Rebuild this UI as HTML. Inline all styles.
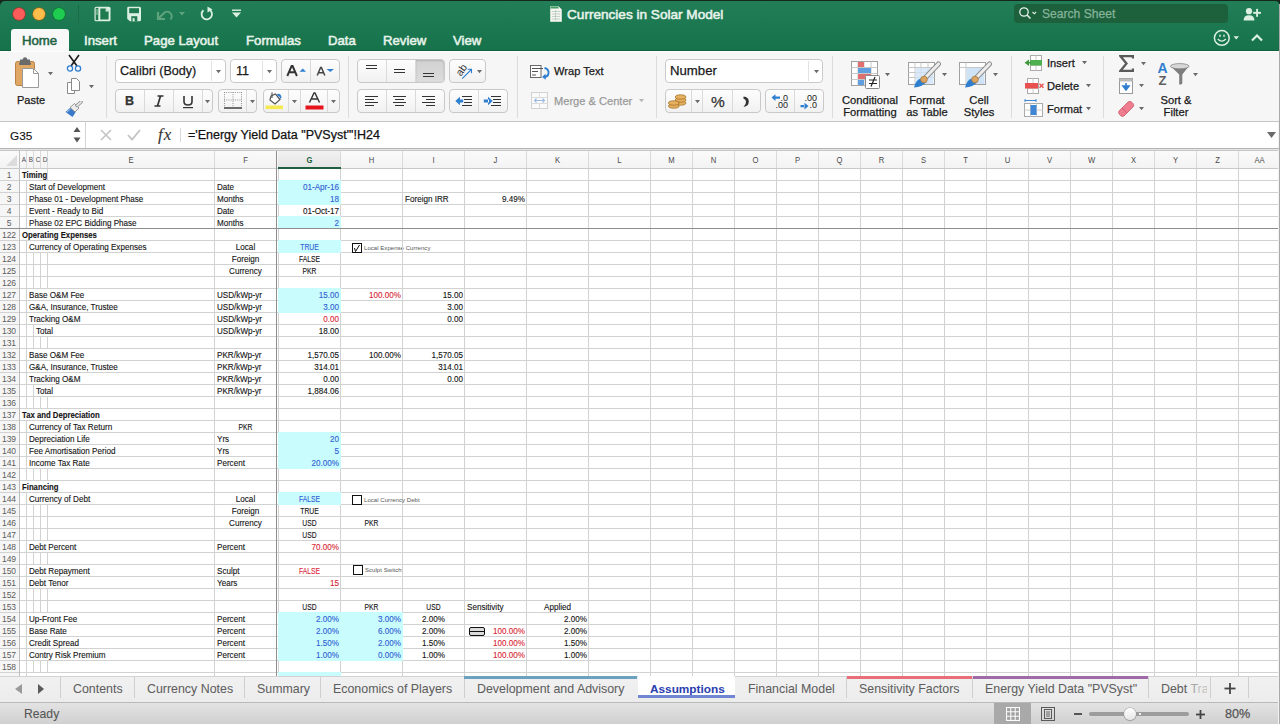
<!DOCTYPE html><html><head><meta charset="utf-8"><style>

*{margin:0;padding:0;box-sizing:border-box}
html,body{width:1280px;height:724px;overflow:hidden;background:#f2f2f2;font-family:"Liberation Sans",sans-serif}
.a{position:absolute}
.t{position:absolute;white-space:nowrap;line-height:1;-webkit-text-stroke:0.25px currentColor}
.btn{position:absolute;border:1px solid #c9c9c9;border-radius:4px;background:linear-gradient(#fdfdfd,#f1f1f1)}
.sep{position:absolute;width:1px;background:#dcdcdc}
.cell{position:absolute;white-space:nowrap;font-size:9px;-webkit-text-stroke:0.12px currentColor;line-height:12px;height:12px;color:#141414;overflow:visible}
.ch{position:absolute;top:151px;height:18px;line-height:18px;text-align:center;font-size:9px;color:#4a4a4a;transform:scaleX(0.85)}
.rh{position:absolute;left:0;width:18px;text-align:center;font-size:8.5px;line-height:12px;color:#5c5c5c}
.tab{position:absolute;-webkit-text-stroke:0.05px currentColor;top:676px;height:26px;line-height:26px;font-size:12.4px;color:#5e5e5e;white-space:nowrap}
.tsep{position:absolute;top:677px;width:1px;height:21px;background:#cfcfcf}

</style></head><body>
<div class="a" style="left:0;top:0;width:1280px;height:8px;background:#17261c"></div>
<div class="a" style="left:0;top:1px;width:1280px;height:50px;background:linear-gradient(#217e56,#15724a);border-radius:5px 5px 0 0"></div>
<div class="a" style="left:0;top:50px;width:1280px;height:1px;background:#10603b"></div>
<div class="a" style="left:13px;top:8px;width:12px;height:12px;border-radius:50%;background:#fc5c5a;box-shadow:0 0 0 0.8px #9c3a2e"></div>
<div class="a" style="left:33px;top:8px;width:12px;height:12px;border-radius:50%;background:#fdbd4a;box-shadow:0 0 0 0.8px #8f6a1e"></div>
<div class="a" style="left:53px;top:8px;width:12px;height:12px;border-radius:50%;background:#1dcc50;box-shadow:0 0 0 0.8px #0f7a34"></div>
<div class="a" style="left:78px;top:5px;width:1px;height:18px;background:#1a6b45"></div>
<svg class="a" style="left:94px;top:6px" width="17" height="16" viewBox="0 0 17 16">
<rect x="0.5" y="0.7" width="16" height="14.6" rx="1.5" fill="#dcefe3"/>
<rect x="1.7" y="1.9" width="2.6" height="12.2" fill="#1f7a4f"/>
<circle cx="3" cy="4" r="0.65" fill="#dcefe3"/><circle cx="3" cy="6" r="0.65" fill="#dcefe3"/><circle cx="3" cy="8" r="0.65" fill="#dcefe3"/>
<path d="M6.3 2.6 H11.8 L14.6 5.4 V13.6 H6.3 Z" fill="#1f7a4f"/>
<path d="M11.6 2.6 V5.6 H14.6 Z" fill="#dcefe3"/>
</svg>
<svg class="a" style="left:127px;top:6px" width="15" height="16" viewBox="0 0 15 16">
<path d="M1.5 0.8 H12.5 Q14 0.8 14 2.3 V13.8 Q14 15.3 12.5 15.3 H2.8 L0.2 12.7 V2.1 Q0.2 0.8 1.5 0.8 Z" fill="#dcefe3"/>
<rect x="2.2" y="2.2" width="9.8" height="5" fill="#1f7a4f"/>
<rect x="4.3" y="10.2" width="6" height="5.1" fill="#1f7a4f"/><rect x="5.6" y="12.2" width="2" height="3.1" fill="#dcefe3"/>
</svg>
<svg class="a" style="left:155px;top:7px" width="34" height="14" viewBox="0 0 34 14">
<path d="M3 5 V12 H10" fill="none" stroke="#5fa37e" stroke-width="2.2"/>
<path d="M3.5 11.5 L9 6 A4.6 4.6 0 0 1 15.5 12.5" fill="none" stroke="#5fa37e" stroke-width="2"/>
<path d="M24 5 L30 5 L27 8.5 Z" fill="#5fa37e"/>
</svg>
<svg class="a" style="left:199px;top:6px" width="15" height="16" viewBox="0 0 15 16">
<path d="M4.5 4.2 A5.2 5.2 0 1 0 10 3.5" fill="none" stroke="#dcefe3" stroke-width="1.8"/>
<path d="M8.5 0.5 L8.5 6.5 L13.5 3.5 Z" fill="#dcefe3"/>
</svg>
<svg class="a" style="left:231px;top:9px" width="11" height="9" viewBox="0 0 11 9">
<rect x="1" y="0.5" width="9" height="1.4" fill="#dcefe3"/><path d="M1 3.5 L10 3.5 L5.5 8.5 Z" fill="#dcefe3"/>
</svg>
<svg class="a" style="left:550px;top:6px" width="12" height="16" viewBox="0 0 12 16">
<path d="M0.5 0.5 H8.5 L11.5 3.5 V15.5 H0.5 Z" fill="#f4f4f0" stroke="#c8d8cc" stroke-width="1"/>
<rect x="0.5" y="0.5" width="8" height="2" fill="#43a066"/>
<g stroke="#b9c9bd" stroke-width="0.8"><line x1="2" y1="5.5" x2="10" y2="5.5"/><line x1="2" y1="8" x2="10" y2="8"/><line x1="2" y1="10.5" x2="10" y2="10.5"/><line x1="2" y1="13" x2="10" y2="13"/><line x1="5.5" y1="4" x2="5.5" y2="14.5"/></g>
</svg>
<div class="t" style="left:567px;top:8px;font-size:13.6px;color:#e6f3ea;-webkit-text-stroke:0.55px #e6f3ea">Currencies in Solar Model</div>
<div class="a" style="left:1014px;top:4px;width:214px;height:19px;border-radius:4px;background:#1c613c"></div>
<svg class="a" style="left:1018px;top:6px" width="20" height="14" viewBox="0 0 20 14">
<circle cx="6" cy="6" r="4.2" fill="none" stroke="#e6f3ea" stroke-width="1.3"/><line x1="9" y1="9" x2="12.5" y2="12.5" stroke="#e6f3ea" stroke-width="1.5"/>
<path d="M14.5 6 L16.3 7.8 L18.1 6" fill="none" stroke="#e6f3ea" stroke-width="1.1"/>
</svg>
<div class="t" style="left:1042px;top:8px;font-size:12.1px;color:#86b39a">Search Sheet</div>
<svg class="a" style="left:1243px;top:6px" width="20" height="16" viewBox="0 0 20 16">
<circle cx="6" cy="5.2" r="3.1" fill="#dcefe3"/><path d="M0.6 14.4 Q0.6 9.2 6 9.2 Q11.4 9.2 11.4 14.4 Z" fill="#dcefe3"/>
<rect x="10.2" y="5.9" width="7.8" height="1.9" fill="#dcefe3"/><rect x="13.15" y="2.9" width="1.9" height="7.9" fill="#dcefe3"/>
</svg>
<div class="a" style="left:11px;top:29px;width:58px;height:23px;background:#f8f8f8;border-radius:3px 3px 0 0"></div>
<div class="t" style="left:22px;top:34px;font-size:13.2px;color:#1f6444;-webkit-text-stroke:0.55px #1f6444">Home</div>
<div class="t" style="left:84px;top:34px;font-size:13.2px;color:#e6f3ea;-webkit-text-stroke:0.55px #e6f3ea">Insert</div>
<div class="t" style="left:144px;top:34px;font-size:13.2px;color:#e6f3ea;-webkit-text-stroke:0.55px #e6f3ea">Page Layout</div>
<div class="t" style="left:246px;top:34px;font-size:13.2px;color:#e6f3ea;-webkit-text-stroke:0.55px #e6f3ea">Formulas</div>
<div class="t" style="left:328px;top:34px;font-size:13.2px;color:#e6f3ea;-webkit-text-stroke:0.55px #e6f3ea">Data</div>
<div class="t" style="left:383px;top:34px;font-size:13.2px;color:#e6f3ea;-webkit-text-stroke:0.55px #e6f3ea">Review</div>
<div class="t" style="left:453px;top:34px;font-size:13.2px;color:#e6f3ea;-webkit-text-stroke:0.55px #e6f3ea">View</div>
<svg class="a" style="left:1213px;top:29px" width="30" height="18" viewBox="0 0 30 18">
<circle cx="8.8" cy="8.9" r="7.4" fill="none" stroke="#dcefe3" stroke-width="1.5"/>
<ellipse cx="7" cy="6.8" rx="0.8" ry="1.3" fill="#dcefe3"/><ellipse cx="11" cy="6.8" rx="0.8" ry="1.3" fill="#dcefe3"/>
<path d="M4.8 10 Q8.8 14.2 12.8 10" fill="none" stroke="#dcefe3" stroke-width="1.3"/>
<path d="M20.5 7.2 L26 7.2 L23.25 10.6 Z" fill="#dcefe3"/>
</svg>
<svg class="a" style="left:1250px;top:33px" width="14" height="10" viewBox="0 0 14 10">
<path d="M2 7.5 L7 2.5 L12 7.5" fill="none" stroke="#dcefe3" stroke-width="2.2"/>
</svg>
<div class="a" style="left:0;top:51px;width:1280px;height:71px;background:#f6f6f6;border-bottom:1px solid #c5c5c5;border-top:1px solid #fdfdfd"></div>
<svg class="a" style="left:14px;top:57px" width="28" height="32" viewBox="0 0 28 32">
<rect x="1.5" y="4.5" width="19" height="24" rx="2" fill="#e0a664" stroke="#b98144" stroke-width="1"/>
<path d="M6 2.5 h10 v4 h-10z" fill="#6a6a6a"/><circle cx="11" cy="2.5" r="2.2" fill="#6a6a6a"/>
<rect x="5" y="5.5" width="12" height="2.5" rx="1" fill="#6a6a6a"/>
<path d="M8.5 11.5 H19.5 L24.5 16.5 V30.5 H8.5 Z" fill="#fff" stroke="#9a9a9a" stroke-width="1"/>
<path d="M19.5 11.5 V16.5 H24.5" fill="none" stroke="#9a9a9a" stroke-width="1"/>
</svg>
<svg class="a" style="left:47px;top:71px" width="7" height="5" viewBox="0 0 7 5"><path d="M1 1 L6 1 L3.5 4.2 Z" fill="#6b6b6b"/></svg>
<div class="t" style="left:17px;top:95px;font-size:11px;color:#1a1a1a;">Paste</div>
<svg class="a" style="left:66px;top:54px" width="16" height="18" viewBox="0 0 16 18">
<path d="M3 1 L11 12 M13 1 L5 12" stroke="#1a1a1a" stroke-width="1.6"/>
<circle cx="4" cy="14.5" r="2.6" fill="none" stroke="#2f7fd0" stroke-width="1.3"/>
<circle cx="12" cy="14.5" r="2.6" fill="none" stroke="#2f7fd0" stroke-width="1.3"/>
</svg>
<svg class="a" style="left:66px;top:77px" width="16" height="18" viewBox="0 0 16 18">
<path d="M1.5 5.5 h7 v11 h-7z" fill="#fff" stroke="#8a8a8a" stroke-width="1"/>
<path d="M5.5 1.5 h5 l3 3 v9 h-8z" fill="#fff" stroke="#8a8a8a" stroke-width="1"/>
</svg>
<svg class="a" style="left:88px;top:84px" width="7" height="5" viewBox="0 0 7 5"><path d="M1 1 L6 1 L3.5 4.2 Z" fill="#6b6b6b"/></svg>
<svg class="a" style="left:64px;top:101px" width="20" height="17" viewBox="0 0 20 17">
<path d="M1.5 11 L6.5 6.5 L11.5 11.5 L8.5 16 Z" fill="#3a78c8"/>
<path d="M2.5 11.5 L6.5 8" stroke="#a9c6ea" stroke-width="1"/>
<path d="M6 6.5 L10.5 2.5 L15 7 L11 11 Z" fill="#ececec" stroke="#8a8a8a" stroke-width="0.9"/>
<path d="M13 4.5 L17 1" stroke="#8a8a8a" stroke-width="3.4" stroke-linecap="round"/>
<path d="M13 4.5 L17 1" stroke="#e6e6e6" stroke-width="1.8" stroke-linecap="round"/>
</svg>
<div class="sep" style="left:106px;top:56px;height:62px"></div>
<div class="a" style="left:115px;top:59px;width:111px;height:24px;background:#fff;border:1px solid #c9c9c9;border-radius:4px"></div>
<div class="a" style="left:211px;top:61px;width:1px;height:20px;background:#e2e2e2"></div>
<div class="t" style="left:120px;top:65px;font-size:12.6px;color:#1a1a1a;">Calibri (Body)</div>
<svg class="a" style="left:215px;top:69px" width="7" height="5" viewBox="0 0 7 5"><path d="M1 1 L6 1 L3.5 4.2 Z" fill="#6b6b6b"/></svg>
<div class="a" style="left:230px;top:59px;width:47px;height:24px;background:#fff;border:1px solid #c9c9c9;border-radius:4px"></div>
<div class="a" style="left:262px;top:61px;width:1px;height:20px;background:#e2e2e2"></div>
<div class="t" style="left:236px;top:65px;font-size:12.6px;color:#1a1a1a;">11</div>
<svg class="a" style="left:266px;top:69px" width="7" height="5" viewBox="0 0 7 5"><path d="M1 1 L6 1 L3.5 4.2 Z" fill="#6b6b6b"/></svg>
<div class="btn" style="left:281px;top:59px;width:59px;height:24px"></div>
<div class="a" style="left:310px;top:60px;width:1px;height:22px;background:#dadada"></div>
<svg class="a" style="left:285px;top:63px" width="52" height="16" viewBox="0 0 52 16">
<path d="M2.3 13 L6.6 3 L7.6 3 L11.9 13 M4 9.3 H10.2" fill="none" stroke="#333" stroke-width="1.9"/>
<path d="M14.5 8.7 L17.8 5.5 L21 8.7 Z" fill="#2f7fd0"/>
<path d="M32.2 12.5 L35.6 4.5 L36.4 4.5 L39.8 12.5 M33.5 9.7 H38.5" fill="none" stroke="#444" stroke-width="1.5"/>
<path d="M41.5 6 L49 6 L45.25 9 Z" fill="#2f7fd0"/>
</svg>
<div class="btn" style="left:115px;top:89px;width:98px;height:24px"></div>
<div class="a" style="left:144px;top:90px;width:1px;height:22px;background:#dadada"></div>
<div class="a" style="left:173px;top:90px;width:1px;height:22px;background:#dadada"></div>
<div class="a" style="left:202px;top:90px;width:1px;height:22px;background:#dadada"></div>
<div class="t" style="left:125px;top:95px;font-size:12.5px;font-weight:bold;color:#333">B</div>
<svg class="a" style="left:153px;top:95px" width="12" height="12" viewBox="0 0 12 12"><path d="M4.5 1 H10.5 M1.5 11 H7.5 M7.5 1 L4.5 11" stroke="#333" stroke-width="1.7" fill="none"/></svg>
<svg class="a" style="left:182px;top:95px" width="12" height="14" viewBox="0 0 12 14"><path d="M2 1 V6.5 Q2 10 6 10 Q10 10 10 6.5 V1" stroke="#333" stroke-width="1.6" fill="none"/><rect x="1" y="12" width="10" height="1.2" fill="#333"/></svg>
<svg class="a" style="left:204px;top:99px" width="7" height="5" viewBox="0 0 7 5"><path d="M1 1 L6 1 L3.5 4.2 Z" fill="#6b6b6b"/></svg>
<div class="btn" style="left:218px;top:89px;width:39px;height:24px"></div>
<div class="a" style="left:246px;top:90px;width:1px;height:22px;background:#dadada"></div>
<svg class="a" style="left:223px;top:91px" width="20" height="19" viewBox="0 0 20 19">
<g stroke="#8a8a8a" stroke-width="0.9" stroke-dasharray="1 1.2"><path d="M1 1.5 H19 M1 9 H19 M1.5 1 V16 M10 1 V16 M18.5 1 V16"/></g>
<rect x="1" y="16.3" width="18" height="1.4" fill="#333"/></svg>
<svg class="a" style="left:249px;top:99px" width="7" height="5" viewBox="0 0 7 5"><path d="M1 1 L6 1 L3.5 4.2 Z" fill="#6b6b6b"/></svg>
<div class="btn" style="left:263px;top:89px;width:77px;height:24px"></div>
<div class="a" style="left:288px;top:90px;width:1px;height:22px;background:#dadada"></div>
<div class="a" style="left:300px;top:90px;width:1px;height:22px;background:#dadada"></div>
<div class="a" style="left:327px;top:90px;width:1px;height:22px;background:#dadada"></div>
<svg class="a" style="left:265px;top:90px" width="20" height="20" viewBox="0 0 20 20">
<path d="M6 6 L10.5 4 L15 9.5 L10 14 L5 10 Z" fill="#fff" stroke="#555" stroke-width="1.2"/>
<path d="M7 2.5 L7 8" stroke="#555" stroke-width="1.2"/>
<path d="M12 4 Q16 3 16.5 7.5 L15.5 9 Q15 6 12.5 5.5Z" fill="#2f7fd0"/>
<rect x="0.5" y="15.5" width="17.5" height="3.6" fill="#f4ea50"/></svg>
<svg class="a" style="left:291px;top:99px" width="7" height="5" viewBox="0 0 7 5"><path d="M1 1 L6 1 L3.5 4.2 Z" fill="#6b6b6b"/></svg>
<svg class="a" style="left:305px;top:92px" width="19" height="18" viewBox="0 0 19 18">
<path d="M4.5 10.5 L9 1 L10 1 L14.5 10.5 M6.3 7 H12.7" fill="none" stroke="#333" stroke-width="1.4"/>
<rect x="0.5" y="13.5" width="18" height="4" fill="#e8141c"/></svg>
<svg class="a" style="left:330px;top:99px" width="7" height="5" viewBox="0 0 7 5"><path d="M1 1 L6 1 L3.5 4.2 Z" fill="#6b6b6b"/></svg>
<div class="sep" style="left:348px;top:56px;height:62px"></div>
<div class="btn" style="left:357px;top:59px;width:88px;height:24px"></div>
<div class="a" style="left:416px;top:60px;width:28px;height:22px;background:linear-gradient(#d2d2d2,#dcdcdc);border-radius:0 3px 3px 0;box-shadow:inset 0 1px 2px rgba(0,0,0,.15)"></div>
<div class="a" style="left:386px;top:60px;width:1px;height:22px;background:#dadada"></div>
<div class="a" style="left:415px;top:60px;width:1px;height:22px;background:#dadada"></div>
<svg class="a" style="left:364px;top:63px" width="76" height="16" viewBox="0 0 76 16">
<g stroke="#333" stroke-width="1.2"><path d="M2 2.5 H13 M2 5.5 H13"/><path d="M30 6.5 H41 M30 9.5 H41"/><path d="M59 10.5 H70 M59 13.5 H70"/></g></svg>
<div class="btn" style="left:449px;top:59px;width:37px;height:24px"></div>
<svg class="a" style="left:454px;top:62px" width="20" height="18" viewBox="0 0 20 18">
<text x="7.5" y="11.5" text-anchor="middle" font-size="10.5" font-family="Liberation Sans" fill="#333" transform="rotate(-55 7.5 8)">ab</text>
<path d="M8.2 16.6 L17.3 7.5 M13.6 7.3 H17.5 V11.2" fill="none" stroke="#2f7fd0" stroke-width="1.1"/></svg>
<svg class="a" style="left:476px;top:69px" width="7" height="5" viewBox="0 0 7 5"><path d="M1 1 L6 1 L3.5 4.2 Z" fill="#6b6b6b"/></svg>
<div class="btn" style="left:357px;top:89px;width:88px;height:24px"></div>
<div class="a" style="left:386px;top:90px;width:1px;height:22px;background:#dadada"></div>
<div class="a" style="left:415px;top:90px;width:1px;height:22px;background:#dadada"></div>
<svg class="a" style="left:364px;top:94px" width="76" height="14" viewBox="0 0 76 14">
<g stroke="#333" stroke-width="1.1"><path d="M1 2.5 H14 M1 5.5 H10 M1 8.5 H14 M1 11.5 H10"/>
<path d="M29 2.5 H42 M31 5.5 H40 M29 8.5 H42 M31 11.5 H40"/>
<path d="M58 2.5 H71 M62 5.5 H71 M58 8.5 H71 M62 11.5 H71"/></g></svg>
<div class="btn" style="left:449px;top:89px;width:59px;height:24px"></div>
<div class="a" style="left:478px;top:90px;width:1px;height:22px;background:#dadada"></div>
<svg class="a" style="left:455px;top:94px" width="48" height="14" viewBox="0 0 48 14">
<g stroke="#333" stroke-width="1.1"><path d="M7 2.5 H17 M9 5.5 H17 M9 8.5 H17 M7 11.5 H17"/><path d="M36 2.5 H46 M38 5.5 H46 M38 8.5 H46 M36 11.5 H46"/></g>
<path d="M0.3 7 L5 2.8 V11.2 Z M4 5.5 H8.2 V8.5 H4Z" fill="#2f7fd0"/>
<path d="M37.7 7 L33 2.8 V11.2 Z M28.8 5.5 H34 V8.5 H28.8Z" fill="#2f7fd0"/></svg>
<div class="sep" style="left:517px;top:56px;height:62px"></div>
<svg class="a" style="left:529px;top:64px" width="22" height="16" viewBox="0 0 22 16">
<rect x="1.5" y="1.5" width="10.5" height="12" fill="#fff" stroke="#666" stroke-width="1"/>
<path d="M3 4.5 H14 M3 7.5 H9 M3 11 H7" stroke="#555" stroke-width="1"/>
<path d="M15.5 4 Q20 5 19.5 9.5 Q19 12.5 15.5 13" fill="none" stroke="#2f7fd0" stroke-width="1.8"/><path d="M13 13 L16.5 9.8 L16.8 15.8 Z" fill="#2f7fd0"/></svg>
<div class="t" style="left:554px;top:66px;font-size:11.1px;color:#1a1a1a;">Wrap Text</div>
<svg class="a" style="left:530px;top:92px" width="19" height="17" viewBox="0 0 19 17">
<rect x="1.5" y="0.5" width="16" height="16" fill="#fafafa" stroke="#d2d2d2" stroke-width="1"/>
<path d="M1.5 5.5 H17.5 M1.5 11.5 H17.5 M9.5 0.5 V5.5 M9.5 11.5 V16.5" stroke="#dcdcdc"/>
<path d="M4.5 8.5 H14.5 M6.5 6.5 L4.5 8.5 L6.5 10.5 M12.5 6.5 L14.5 8.5 L12.5 10.5" fill="none" stroke="#9dbbe0" stroke-width="1.1"/></svg>
<div class="t" style="left:554px;top:96px;font-size:11.1px;color:#9a9a9a;">Merge &amp; Center</div>
<svg class="a" style="left:638px;top:98px" width="7" height="5" viewBox="0 0 7 5"><path d="M1 1 L6 1 L3.5 4.2 Z" fill="#b5b5b5"/></svg>
<div class="sep" style="left:656px;top:56px;height:62px"></div>
<div class="a" style="left:665px;top:59px;width:158px;height:24px;background:#fff;border:1px solid #c9c9c9;border-radius:4px"></div>
<div class="a" style="left:808px;top:61px;width:1px;height:20px;background:#e2e2e2"></div>
<div class="t" style="left:670px;top:64px;font-size:13.2px;color:#1a1a1a;">Number</div>
<svg class="a" style="left:813px;top:69px" width="7" height="5" viewBox="0 0 7 5"><path d="M1 1 L6 1 L3.5 4.2 Z" fill="#6b6b6b"/></svg>
<div class="btn" style="left:665px;top:89px;width:96px;height:24px"></div>
<div class="a" style="left:691px;top:90px;width:1px;height:22px;background:#dadada"></div>
<div class="a" style="left:702px;top:90px;width:1px;height:22px;background:#dadada"></div>
<div class="a" style="left:732px;top:90px;width:1px;height:22px;background:#dadada"></div>
<svg class="a" style="left:668px;top:92px" width="22" height="18" viewBox="0 0 22 18">
<g fill="#e6b060" stroke="#9c6a1c" stroke-width="0.7">
<ellipse cx="12.6" cy="11" rx="5.3" ry="2.2"/><ellipse cx="12.6" cy="8" rx="5.3" ry="2.2"/><ellipse cx="12.6" cy="5" rx="5.3" ry="2.2"/>
<ellipse cx="5.8" cy="14" rx="5.3" ry="2.2"/><ellipse cx="5.8" cy="11" rx="5.3" ry="2.2"/></g></svg>
<svg class="a" style="left:694px;top:99px" width="7" height="5" viewBox="0 0 7 5"><path d="M1 1 L6 1 L3.5 4.2 Z" fill="#6b6b6b"/></svg>
<div class="t" style="left:711px;top:94px;font-size:15.5px;color:#333">%</div>
<svg class="a" style="left:742px;top:95px" width="8" height="13" viewBox="0 0 8 13"><path d="M1.5 1.5 Q6.8 2 6.8 6.5 Q6.8 11 1.5 12 Q4.2 9.5 4 6.8 Q4 4.5 1.5 3.8 Z" fill="#333"/></svg>
<div class="btn" style="left:765px;top:89px;width:59px;height:24px"></div>
<div class="a" style="left:794px;top:90px;width:1px;height:22px;background:#dadada"></div>
<svg class="a" style="left:770px;top:92px" width="52" height="18" viewBox="0 0 52 18">
<path d="M1.5 5.6 L5.5 2.2 V9 Z M5 4.5 H10 V6.7 H5Z" fill="#2f7fd0"/>
<text x="10.5" y="8.5" font-size="9" font-family="Liberation Sans" fill="#222">.0</text>
<text x="5.5" y="15.7" font-size="9" font-family="Liberation Sans" fill="#222">.00</text>
<text x="34.5" y="8.5" font-size="9" font-family="Liberation Sans" fill="#222">.00</text>
<path d="M38.5 14.1 L34.5 10.7 V17.5 Z M30.5 13 H35 V15.2 H30.5Z" fill="#2f7fd0"/>
<text x="39.5" y="15.7" font-size="9" font-family="Liberation Sans" fill="#222">.0</text></svg>
<div class="sep" style="left:832px;top:56px;height:62px"></div>
<svg class="a" style="left:850px;top:60px" width="32" height="30" viewBox="0 0 32 30">
<rect x="1.5" y="1.5" width="26" height="24" fill="#fff" stroke="#a0a0a0" stroke-width="1"/>
<path d="M1.5 7.5 H27.5 M1.5 13.5 H27.5 M1.5 19.5 H27.5 M8 1.5 V25.5 M14 1.5 V25.5 M21 1.5 V25.5" stroke="#c8c8c8" stroke-width="1"/>
<rect x="8" y="2" width="6" height="5" fill="#e07070"/><rect x="8" y="8" width="13" height="5" fill="#5f9fe0"/><rect x="8" y="14" width="13" height="5" fill="#e07070"/><rect x="8" y="20" width="6" height="5" fill="#5f9fe0"/>
<rect x="15.5" y="15.5" width="14" height="13" rx="1" fill="#fff" stroke="#888" stroke-width="1"/>
<path d="M19 20 H27 M19 23.5 H27 M25 17 L21 26.5" stroke="#222" stroke-width="1.2" fill="none"/></svg>
<svg class="a" style="left:884px;top:72px" width="7" height="5" viewBox="0 0 7 5"><path d="M1 1 L6 1 L3.5 4.2 Z" fill="#6b6b6b"/></svg>
<div class="t" style="left:810px;width:120px;text-align:center;top:95px;font-size:11.2px;color:#1a1a1a">Conditional</div>
<div class="t" style="left:810px;width:120px;text-align:center;top:107px;font-size:11.2px;color:#1a1a1a">Formatting</div>
<svg class="a" style="left:907px;top:61px" width="36" height="28" viewBox="0 0 36 28">
<rect x="1.5" y="1.5" width="26" height="22" fill="#fff" stroke="#a0a0a0" stroke-width="1"/>
<path d="M1.5 6.5 H27.5 M1.5 11.5 H27.5 M1.5 16.5 H27.5 M8 1.5 V23.5 M14 1.5 V23.5 M21 1.5 V23.5" stroke="#c8c8c8" stroke-width="1"/>
<rect x="8.5" y="7" width="18" height="16" fill="#cfe3f7" opacity="0.8"/>
<path d="M31.5 3 L19 16" stroke="#8a8a8a" stroke-width="5" stroke-linecap="round"/><path d="M31.5 3 L19 16" stroke="#ececec" stroke-width="3.2" stroke-linecap="round"/>
<path d="M13.5 17.5 Q8.5 19.5 7 26.5 Q15 26 19.5 21 Z" fill="#2f7fd0"/>
<circle cx="17" cy="18.5" r="3.3" fill="#dba664" stroke="#a9793c" stroke-width="0.8"/></svg>
<svg class="a" style="left:941px;top:72px" width="7" height="5" viewBox="0 0 7 5"><path d="M1 1 L6 1 L3.5 4.2 Z" fill="#6b6b6b"/></svg>
<div class="t" style="left:867px;width:120px;text-align:center;top:95px;font-size:11.2px;color:#1a1a1a">Format</div>
<div class="t" style="left:867px;width:120px;text-align:center;top:107px;font-size:11.2px;color:#1a1a1a">as Table</div>
<svg class="a" style="left:958px;top:61px" width="36" height="28" viewBox="0 0 36 28">
<rect x="1.5" y="1.5" width="26" height="22" fill="#fff" stroke="#a0a0a0" stroke-width="1"/>
<path d="M1.5 6.5 H27.5 M8 1.5 V23.5" stroke="#c8c8c8" stroke-width="1"/>
<rect x="8.5" y="7" width="18" height="16" fill="#cfe3f7"/>
<path d="M31.5 3 L19 16" stroke="#8a8a8a" stroke-width="5" stroke-linecap="round"/><path d="M31.5 3 L19 16" stroke="#ececec" stroke-width="3.2" stroke-linecap="round"/>
<path d="M13.5 17.5 Q8.5 19.5 7 26.5 Q15 26 19.5 21 Z" fill="#2f7fd0"/>
<circle cx="17" cy="18.5" r="3.3" fill="#dba664" stroke="#a9793c" stroke-width="0.8"/></svg>
<svg class="a" style="left:992px;top:72px" width="7" height="5" viewBox="0 0 7 5"><path d="M1 1 L6 1 L3.5 4.2 Z" fill="#6b6b6b"/></svg>
<div class="t" style="left:919px;width:120px;text-align:center;top:95px;font-size:11.2px;color:#1a1a1a">Cell</div>
<div class="t" style="left:919px;width:120px;text-align:center;top:107px;font-size:11.2px;color:#1a1a1a">Styles</div>
<div class="sep" style="left:1011px;top:56px;height:62px"></div>
<svg class="a" style="left:1024px;top:55px" width="24" height="19" viewBox="0 0 24 19"><rect x="6.5" y="0.5" width="11" height="15" fill="#fff" stroke="#aaa"/><path d="M6.5 5.5 H17.5 M6.5 10.5 H17.5 M12 0.5 V15.5" stroke="#ccc"/><rect x="6" y="5" width="12" height="5.5" fill="#4fb04f"/><path d="M0.5 7.75 L5 4.5 V11 Z M3 6.9 H7 V8.6 H3Z" fill="#3d9a3d"/></svg>
<div class="t" style="left:1047px;top:58px;font-size:11.1px;color:#1a1a1a;">Insert</div>
<svg class="a" style="left:1081px;top:60px" width="7" height="5" viewBox="0 0 7 5"><path d="M1 1 L6 1 L3.5 4.2 Z" fill="#6b6b6b"/></svg>
<svg class="a" style="left:1024px;top:78px" width="24" height="19" viewBox="0 0 24 19"><rect x="3.5" y="0.5" width="11" height="15" fill="#fff" stroke="#aaa"/><path d="M3.5 5.5 H14.5 M3.5 10.5 H14.5 M9 0.5 V15.5" stroke="#ccc"/><rect x="1" y="5" width="13" height="5.5" fill="#e84f4f"/><path d="M15.5 5.8 L19.5 9.8 M19.5 5.8 L15.5 9.8" stroke="#e84f4f" stroke-width="1.4"/></svg>
<div class="t" style="left:1047px;top:81px;font-size:11.1px;color:#1a1a1a;">Delete</div>
<svg class="a" style="left:1085px;top:83px" width="7" height="5" viewBox="0 0 7 5"><path d="M1 1 L6 1 L3.5 4.2 Z" fill="#6b6b6b"/></svg>
<svg class="a" style="left:1024px;top:99px" width="24" height="19" viewBox="0 0 24 19"><rect x="0.5" y="4.5" width="18" height="13" fill="#fff" stroke="#aaa"/><path d="M0.5 11 H18.5 M6.5 4.5 V17.5 M12.5 4.5 V17.5" stroke="#ccc"/><rect x="6.5" y="6" width="6" height="10" fill="#3f86d6"/><path d="M1 1.5 H12 M1 0 V3 M12 0 V3" stroke="#3f86d6" stroke-width="1"/></svg>
<div class="t" style="left:1047px;top:104px;font-size:11.1px;color:#1a1a1a;">Format</div>
<svg class="a" style="left:1085px;top:106px" width="7" height="5" viewBox="0 0 7 5"><path d="M1 1 L6 1 L3.5 4.2 Z" fill="#6b6b6b"/></svg>
<div class="sep" style="left:1103px;top:56px;height:62px"></div>
<svg class="a" style="left:1119px;top:55px" width="15" height="17" viewBox="0 0 15 17"><path d="M14 3.5 V1.2 H1.5 L7.5 8.5 L1.5 15.8 H14 V13.5" fill="none" stroke="#5a5a5a" stroke-width="2.3" stroke-linejoin="miter"/></svg>
<svg class="a" style="left:1140px;top:61px" width="7" height="5" viewBox="0 0 7 5"><path d="M1 1 L6 1 L3.5 4.2 Z" fill="#6b6b6b"/></svg>
<svg class="a" style="left:1119px;top:78px" width="15" height="16" viewBox="0 0 15 16">
<rect x="0.5" y="0.5" width="13" height="15" fill="#fff" stroke="#999"/><rect x="0.5" y="0.5" width="13" height="3" fill="#bbb"/>
<path d="M7 5 V10 M4 8 L7 12 L10 8Z" stroke="#2f7fd0" fill="#2f7fd0" stroke-width="1.6"/></svg>
<svg class="a" style="left:1138px;top:83px" width="7" height="5" viewBox="0 0 7 5"><path d="M1 1 L6 1 L3.5 4.2 Z" fill="#6b6b6b"/></svg>
<svg class="a" style="left:1118px;top:100px" width="17" height="17" viewBox="0 0 17 17">
<path d="M1 11 L10 2 Q12 0.5 14 2.5 L15 3.5 Q16.5 5.5 15 7 L6 16 Q4 17 2.5 15.5 L1.5 14.5 Q0 12.5 1 11Z" fill="#ef7d8f" stroke="#c85a6c" stroke-width="0.8"/>
<path d="M4 8 L9 13" stroke="#c85a6c" stroke-width="0.8"/></svg>
<svg class="a" style="left:1138px;top:106px" width="7" height="5" viewBox="0 0 7 5"><path d="M1 1 L6 1 L3.5 4.2 Z" fill="#6b6b6b"/></svg>
<svg class="a" style="left:1157px;top:60px" width="36" height="28" viewBox="0 0 36 28">
<text x="0.5" y="12.5" font-size="14" font-weight="bold" font-family="Liberation Sans" fill="#2f7fd0">A</text>
<text x="1.5" y="25" font-size="13" font-weight="bold" font-family="Liberation Sans" fill="#5f5f5f">Z</text>
<path d="M13.5 6 H32 L25.3 14.5 V23 Q25.3 24.5 23.5 24.5 H22.2 V14.5 Z" fill="#7e7e7e"/>
<ellipse cx="22.75" cy="6.2" rx="9.3" ry="2.6" fill="#d8d8d8" stroke="#888" stroke-width="0.8"/></svg>
<svg class="a" style="left:1192px;top:72px" width="7" height="5" viewBox="0 0 7 5"><path d="M1 1 L6 1 L3.5 4.2 Z" fill="#6b6b6b"/></svg>
<div class="t" style="left:1116px;width:120px;text-align:center;top:95px;font-size:11.2px;color:#1a1a1a">Sort &amp;</div>
<div class="t" style="left:1116px;width:120px;text-align:center;top:107px;font-size:11.2px;color:#1a1a1a">Filter</div>
<div class="a" style="left:0;top:122px;width:1278px;height:26px;background:#fff"></div>
<div class="a" style="left:0;top:148px;width:1280px;height:1px;background:#b4b4b4"></div>
<div class="a" style="left:0;top:149px;width:1280px;height:1px;background:#e6e6e6"></div>
<div class="a" style="left:85px;top:122px;width:1px;height:26px;background:#d4d4d4"></div>
<div class="t" style="left:10px;top:131px;font-size:11.8px;color:#111;-webkit-text-stroke:0.1px #111">G35</div>
<svg class="a" style="left:73px;top:126px" width="9" height="18" viewBox="0 0 9 18">
<path d="M0.5 6 L4 1 L7.5 6 Z" fill="#555"/><path d="M0.5 11.5 L7.5 11.5 L4 16.5 Z" fill="#555"/></svg>
<svg class="a" style="left:99px;top:128px" width="50" height="14" viewBox="0 0 50 14">
<path d="M2 2 L12 12 M12 2 L2 12" stroke="#c4c4c4" stroke-width="1.6"/>
<path d="M29 7 L33 11.5 L41 2" fill="none" stroke="#c4c4c4" stroke-width="1.8"/></svg>
<div class="t" style="left:158px;top:126px;font-size:17px;font-family:'Liberation Serif',serif;font-style:italic;color:#333;letter-spacing:1px;-webkit-text-stroke:0.1px #333">fx</div>
<div class="a" style="left:180px;top:128px;width:1px;height:14px;background:#d8d8d8"></div>
<div class="t" style="left:188px;top:129px;font-size:12.5px;color:#111">='Energy Yield Data "PVSyst"'!H24</div>
<svg class="a" style="left:1266px;top:131px" width="11" height="8" viewBox="0 0 11 8"><path d="M1 1 L10 1 L5.5 7 Z" fill="#6a6a6a"/></svg>
<div class="a" style="left:0;top:150px;width:1278px;height:18px;background:linear-gradient(#fbfbfb,#f3f3f3)"></div>
<div class="a" style="left:0;top:150px;width:1278px;height:1px;background:#c6c6c6"></div>
<svg class="a" style="left:5px;top:154px" width="13" height="13" viewBox="0 0 13 13"><path d="M12 1 L12 12 L1 12 Z" fill="#dcdcdc"/></svg>
<div class="a" style="left:278px;top:151px;width:63px;height:16px;background:linear-gradient(#f2f2f2,#e4e4e4)"></div>
<div class="a" style="left:26px;top:151px;width:1px;height:17px;background:#dadada"></div>
<div class="ch" style="left:20px;width:8px;font-size:8px;transform:scaleX(0.8)">A</div>
<div class="a" style="left:33px;top:151px;width:1px;height:17px;background:#dadada"></div>
<div class="ch" style="left:27px;width:8px;font-size:8px;transform:scaleX(0.8)">B</div>
<div class="a" style="left:40px;top:151px;width:1px;height:17px;background:#dadada"></div>
<div class="ch" style="left:34px;width:8px;font-size:8px;transform:scaleX(0.8)">C</div>
<div class="a" style="left:47px;top:151px;width:1px;height:17px;background:#dadada"></div>
<div class="ch" style="left:41px;width:8px;font-size:8px;transform:scaleX(0.8)">D</div>
<div class="a" style="left:214px;top:151px;width:1px;height:17px;background:#dadada"></div>
<div class="ch" style="left:47px;width:168px">E</div>
<div class="a" style="left:276px;top:151px;width:1px;height:17px;background:#dadada"></div>
<div class="ch" style="left:214px;width:63px">F</div>
<div class="a" style="left:340px;top:151px;width:1px;height:17px;background:#dadada"></div>
<div class="ch" style="left:278px;width:63px;color:#1d5e3d;font-weight:bold">G</div>
<div class="a" style="left:402px;top:151px;width:1px;height:17px;background:#dadada"></div>
<div class="ch" style="left:340px;width:63px">H</div>
<div class="a" style="left:464px;top:151px;width:1px;height:17px;background:#dadada"></div>
<div class="ch" style="left:402px;width:63px">I</div>
<div class="a" style="left:526px;top:151px;width:1px;height:17px;background:#dadada"></div>
<div class="ch" style="left:464px;width:63px">J</div>
<div class="a" style="left:588px;top:151px;width:1px;height:17px;background:#dadada"></div>
<div class="ch" style="left:526px;width:63px">K</div>
<div class="a" style="left:650px;top:151px;width:1px;height:17px;background:#dadada"></div>
<div class="ch" style="left:588px;width:63px">L</div>
<div class="a" style="left:692px;top:151px;width:1px;height:17px;background:#dadada"></div>
<div class="ch" style="left:650px;width:43px">M</div>
<div class="a" style="left:734px;top:151px;width:1px;height:17px;background:#dadada"></div>
<div class="ch" style="left:692px;width:43px">N</div>
<div class="a" style="left:776px;top:151px;width:1px;height:17px;background:#dadada"></div>
<div class="ch" style="left:734px;width:43px">O</div>
<div class="a" style="left:818px;top:151px;width:1px;height:17px;background:#dadada"></div>
<div class="ch" style="left:776px;width:43px">P</div>
<div class="a" style="left:860px;top:151px;width:1px;height:17px;background:#dadada"></div>
<div class="ch" style="left:818px;width:43px">Q</div>
<div class="a" style="left:902px;top:151px;width:1px;height:17px;background:#dadada"></div>
<div class="ch" style="left:860px;width:43px">R</div>
<div class="a" style="left:944px;top:151px;width:1px;height:17px;background:#dadada"></div>
<div class="ch" style="left:902px;width:43px">S</div>
<div class="a" style="left:986px;top:151px;width:1px;height:17px;background:#dadada"></div>
<div class="ch" style="left:944px;width:43px">T</div>
<div class="a" style="left:1028px;top:151px;width:1px;height:17px;background:#dadada"></div>
<div class="ch" style="left:986px;width:43px">U</div>
<div class="a" style="left:1070px;top:151px;width:1px;height:17px;background:#dadada"></div>
<div class="ch" style="left:1028px;width:43px">V</div>
<div class="a" style="left:1112px;top:151px;width:1px;height:17px;background:#dadada"></div>
<div class="ch" style="left:1070px;width:43px">W</div>
<div class="a" style="left:1154px;top:151px;width:1px;height:17px;background:#dadada"></div>
<div class="ch" style="left:1112px;width:43px">X</div>
<div class="a" style="left:1196px;top:151px;width:1px;height:17px;background:#dadada"></div>
<div class="ch" style="left:1154px;width:43px">Y</div>
<div class="a" style="left:1238px;top:151px;width:1px;height:17px;background:#dadada"></div>
<div class="ch" style="left:1196px;width:43px">Z</div>
<div class="a" style="left:1280px;top:151px;width:1px;height:17px;background:#dadada"></div>
<div class="ch" style="left:1238px;width:43px">AA</div>
<div class="a" style="left:19px;top:151px;width:1px;height:17px;background:#c0c0c0"></div>
<div class="a" style="left:0;top:168px;width:1278px;height:1px;background:#c9c9c9"></div>
<div class="a" style="left:278px;top:167px;width:63px;height:2px;background:#1e5e3e"></div>
<div class="a" style="left:0;top:169px;width:1278px;height:507px;background:#fff"></div>
<div class="a" style="left:0;top:169px;width:19px;height:507px;background:#f6f6f6"></div>
<div class="a" style="left:0;top:180px;width:1278px;height:1px;background:#d2d2d2"></div>
<div class="a" style="left:0;top:192px;width:1278px;height:1px;background:#d2d2d2"></div>
<div class="a" style="left:0;top:204px;width:1278px;height:1px;background:#d2d2d2"></div>
<div class="a" style="left:0;top:216px;width:1278px;height:1px;background:#d2d2d2"></div>
<div class="a" style="left:0;top:228px;width:1278px;height:1px;background:#d2d2d2"></div>
<div class="a" style="left:0;top:240px;width:1278px;height:1px;background:#d2d2d2"></div>
<div class="a" style="left:0;top:252px;width:1278px;height:1px;background:#d2d2d2"></div>
<div class="a" style="left:0;top:264px;width:1278px;height:1px;background:#d2d2d2"></div>
<div class="a" style="left:0;top:276px;width:1278px;height:1px;background:#d2d2d2"></div>
<div class="a" style="left:0;top:288px;width:1278px;height:1px;background:#d2d2d2"></div>
<div class="a" style="left:0;top:300px;width:1278px;height:1px;background:#d2d2d2"></div>
<div class="a" style="left:0;top:312px;width:1278px;height:1px;background:#d2d2d2"></div>
<div class="a" style="left:0;top:324px;width:1278px;height:1px;background:#d2d2d2"></div>
<div class="a" style="left:0;top:336px;width:1278px;height:1px;background:#d2d2d2"></div>
<div class="a" style="left:0;top:348px;width:1278px;height:1px;background:#d2d2d2"></div>
<div class="a" style="left:0;top:360px;width:1278px;height:1px;background:#d2d2d2"></div>
<div class="a" style="left:0;top:372px;width:1278px;height:1px;background:#d2d2d2"></div>
<div class="a" style="left:0;top:384px;width:1278px;height:1px;background:#d2d2d2"></div>
<div class="a" style="left:0;top:396px;width:1278px;height:1px;background:#d2d2d2"></div>
<div class="a" style="left:0;top:408px;width:1278px;height:1px;background:#d2d2d2"></div>
<div class="a" style="left:0;top:420px;width:1278px;height:1px;background:#d2d2d2"></div>
<div class="a" style="left:0;top:432px;width:1278px;height:1px;background:#d2d2d2"></div>
<div class="a" style="left:0;top:444px;width:1278px;height:1px;background:#d2d2d2"></div>
<div class="a" style="left:0;top:456px;width:1278px;height:1px;background:#d2d2d2"></div>
<div class="a" style="left:0;top:468px;width:1278px;height:1px;background:#d2d2d2"></div>
<div class="a" style="left:0;top:480px;width:1278px;height:1px;background:#d2d2d2"></div>
<div class="a" style="left:0;top:492px;width:1278px;height:1px;background:#d2d2d2"></div>
<div class="a" style="left:0;top:504px;width:1278px;height:1px;background:#d2d2d2"></div>
<div class="a" style="left:0;top:516px;width:1278px;height:1px;background:#d2d2d2"></div>
<div class="a" style="left:0;top:528px;width:1278px;height:1px;background:#d2d2d2"></div>
<div class="a" style="left:0;top:540px;width:1278px;height:1px;background:#d2d2d2"></div>
<div class="a" style="left:0;top:552px;width:1278px;height:1px;background:#d2d2d2"></div>
<div class="a" style="left:0;top:564px;width:1278px;height:1px;background:#d2d2d2"></div>
<div class="a" style="left:0;top:576px;width:1278px;height:1px;background:#d2d2d2"></div>
<div class="a" style="left:0;top:588px;width:1278px;height:1px;background:#d2d2d2"></div>
<div class="a" style="left:0;top:600px;width:1278px;height:1px;background:#d2d2d2"></div>
<div class="a" style="left:0;top:612px;width:1278px;height:1px;background:#d2d2d2"></div>
<div class="a" style="left:0;top:624px;width:1278px;height:1px;background:#d2d2d2"></div>
<div class="a" style="left:0;top:636px;width:1278px;height:1px;background:#d2d2d2"></div>
<div class="a" style="left:0;top:648px;width:1278px;height:1px;background:#d2d2d2"></div>
<div class="a" style="left:0;top:660px;width:1278px;height:1px;background:#d2d2d2"></div>
<div class="a" style="left:0;top:672px;width:1278px;height:1px;background:#d2d2d2"></div>
<div class="a" style="left:214px;top:169px;width:1px;height:507px;background:#d2d2d2"></div>
<div class="a" style="left:340px;top:169px;width:1px;height:507px;background:#d2d2d2"></div>
<div class="a" style="left:402px;top:169px;width:1px;height:507px;background:#d2d2d2"></div>
<div class="a" style="left:464px;top:169px;width:1px;height:507px;background:#d2d2d2"></div>
<div class="a" style="left:526px;top:169px;width:1px;height:507px;background:#d2d2d2"></div>
<div class="a" style="left:588px;top:169px;width:1px;height:507px;background:#d2d2d2"></div>
<div class="a" style="left:650px;top:169px;width:1px;height:507px;background:#d2d2d2"></div>
<div class="a" style="left:692px;top:169px;width:1px;height:507px;background:#d2d2d2"></div>
<div class="a" style="left:734px;top:169px;width:1px;height:507px;background:#d2d2d2"></div>
<div class="a" style="left:776px;top:169px;width:1px;height:507px;background:#d2d2d2"></div>
<div class="a" style="left:818px;top:169px;width:1px;height:507px;background:#d2d2d2"></div>
<div class="a" style="left:860px;top:169px;width:1px;height:507px;background:#d2d2d2"></div>
<div class="a" style="left:902px;top:169px;width:1px;height:507px;background:#d2d2d2"></div>
<div class="a" style="left:944px;top:169px;width:1px;height:507px;background:#d2d2d2"></div>
<div class="a" style="left:986px;top:169px;width:1px;height:507px;background:#d2d2d2"></div>
<div class="a" style="left:1028px;top:169px;width:1px;height:507px;background:#d2d2d2"></div>
<div class="a" style="left:1070px;top:169px;width:1px;height:507px;background:#d2d2d2"></div>
<div class="a" style="left:1112px;top:169px;width:1px;height:507px;background:#d2d2d2"></div>
<div class="a" style="left:1154px;top:169px;width:1px;height:507px;background:#d2d2d2"></div>
<div class="a" style="left:1196px;top:169px;width:1px;height:507px;background:#d2d2d2"></div>
<div class="a" style="left:1238px;top:169px;width:1px;height:507px;background:#d2d2d2"></div>
<div class="a" style="left:1280px;top:169px;width:1px;height:507px;background:#d2d2d2"></div>
<div class="a" style="left:278px;top:169px;width:1px;height:507px;background:#d2d2d2"></div>
<div class="a" style="left:47px;top:169px;width:1px;height:11px;background:#d2d2d2"></div>
<div class="a" style="left:26px;top:181px;width:1px;height:11px;background:#d2d2d2"></div>
<div class="a" style="left:26px;top:193px;width:1px;height:11px;background:#d2d2d2"></div>
<div class="a" style="left:26px;top:205px;width:1px;height:11px;background:#d2d2d2"></div>
<div class="a" style="left:26px;top:217px;width:1px;height:11px;background:#d2d2d2"></div>
<div class="a" style="left:26px;top:241px;width:1px;height:11px;background:#d2d2d2"></div>
<div class="a" style="left:26px;top:253px;width:1px;height:11px;background:#d2d2d2"></div>
<div class="a" style="left:33px;top:253px;width:1px;height:11px;background:#d2d2d2"></div>
<div class="a" style="left:40px;top:253px;width:1px;height:11px;background:#d2d2d2"></div>
<div class="a" style="left:47px;top:253px;width:1px;height:11px;background:#d2d2d2"></div>
<div class="a" style="left:26px;top:265px;width:1px;height:11px;background:#d2d2d2"></div>
<div class="a" style="left:33px;top:265px;width:1px;height:11px;background:#d2d2d2"></div>
<div class="a" style="left:40px;top:265px;width:1px;height:11px;background:#d2d2d2"></div>
<div class="a" style="left:47px;top:265px;width:1px;height:11px;background:#d2d2d2"></div>
<div class="a" style="left:26px;top:277px;width:1px;height:11px;background:#d2d2d2"></div>
<div class="a" style="left:33px;top:277px;width:1px;height:11px;background:#d2d2d2"></div>
<div class="a" style="left:40px;top:277px;width:1px;height:11px;background:#d2d2d2"></div>
<div class="a" style="left:47px;top:277px;width:1px;height:11px;background:#d2d2d2"></div>
<div class="a" style="left:26px;top:289px;width:1px;height:11px;background:#d2d2d2"></div>
<div class="a" style="left:26px;top:301px;width:1px;height:11px;background:#d2d2d2"></div>
<div class="a" style="left:26px;top:313px;width:1px;height:11px;background:#d2d2d2"></div>
<div class="a" style="left:26px;top:325px;width:1px;height:11px;background:#d2d2d2"></div>
<div class="a" style="left:33px;top:325px;width:1px;height:11px;background:#d2d2d2"></div>
<div class="a" style="left:26px;top:337px;width:1px;height:11px;background:#d2d2d2"></div>
<div class="a" style="left:33px;top:337px;width:1px;height:11px;background:#d2d2d2"></div>
<div class="a" style="left:40px;top:337px;width:1px;height:11px;background:#d2d2d2"></div>
<div class="a" style="left:47px;top:337px;width:1px;height:11px;background:#d2d2d2"></div>
<div class="a" style="left:26px;top:349px;width:1px;height:11px;background:#d2d2d2"></div>
<div class="a" style="left:26px;top:361px;width:1px;height:11px;background:#d2d2d2"></div>
<div class="a" style="left:26px;top:373px;width:1px;height:11px;background:#d2d2d2"></div>
<div class="a" style="left:26px;top:385px;width:1px;height:11px;background:#d2d2d2"></div>
<div class="a" style="left:33px;top:385px;width:1px;height:11px;background:#d2d2d2"></div>
<div class="a" style="left:26px;top:397px;width:1px;height:11px;background:#d2d2d2"></div>
<div class="a" style="left:33px;top:397px;width:1px;height:11px;background:#d2d2d2"></div>
<div class="a" style="left:40px;top:397px;width:1px;height:11px;background:#d2d2d2"></div>
<div class="a" style="left:47px;top:397px;width:1px;height:11px;background:#d2d2d2"></div>
<div class="a" style="left:26px;top:421px;width:1px;height:11px;background:#d2d2d2"></div>
<div class="a" style="left:26px;top:433px;width:1px;height:11px;background:#d2d2d2"></div>
<div class="a" style="left:26px;top:445px;width:1px;height:11px;background:#d2d2d2"></div>
<div class="a" style="left:26px;top:457px;width:1px;height:11px;background:#d2d2d2"></div>
<div class="a" style="left:26px;top:469px;width:1px;height:11px;background:#d2d2d2"></div>
<div class="a" style="left:33px;top:469px;width:1px;height:11px;background:#d2d2d2"></div>
<div class="a" style="left:40px;top:469px;width:1px;height:11px;background:#d2d2d2"></div>
<div class="a" style="left:47px;top:469px;width:1px;height:11px;background:#d2d2d2"></div>
<div class="a" style="left:26px;top:493px;width:1px;height:11px;background:#d2d2d2"></div>
<div class="a" style="left:26px;top:505px;width:1px;height:11px;background:#d2d2d2"></div>
<div class="a" style="left:33px;top:505px;width:1px;height:11px;background:#d2d2d2"></div>
<div class="a" style="left:40px;top:505px;width:1px;height:11px;background:#d2d2d2"></div>
<div class="a" style="left:47px;top:505px;width:1px;height:11px;background:#d2d2d2"></div>
<div class="a" style="left:26px;top:517px;width:1px;height:11px;background:#d2d2d2"></div>
<div class="a" style="left:33px;top:517px;width:1px;height:11px;background:#d2d2d2"></div>
<div class="a" style="left:40px;top:517px;width:1px;height:11px;background:#d2d2d2"></div>
<div class="a" style="left:47px;top:517px;width:1px;height:11px;background:#d2d2d2"></div>
<div class="a" style="left:26px;top:529px;width:1px;height:11px;background:#d2d2d2"></div>
<div class="a" style="left:33px;top:529px;width:1px;height:11px;background:#d2d2d2"></div>
<div class="a" style="left:40px;top:529px;width:1px;height:11px;background:#d2d2d2"></div>
<div class="a" style="left:47px;top:529px;width:1px;height:11px;background:#d2d2d2"></div>
<div class="a" style="left:26px;top:541px;width:1px;height:11px;background:#d2d2d2"></div>
<div class="a" style="left:26px;top:553px;width:1px;height:11px;background:#d2d2d2"></div>
<div class="a" style="left:33px;top:553px;width:1px;height:11px;background:#d2d2d2"></div>
<div class="a" style="left:40px;top:553px;width:1px;height:11px;background:#d2d2d2"></div>
<div class="a" style="left:47px;top:553px;width:1px;height:11px;background:#d2d2d2"></div>
<div class="a" style="left:26px;top:565px;width:1px;height:11px;background:#d2d2d2"></div>
<div class="a" style="left:26px;top:577px;width:1px;height:11px;background:#d2d2d2"></div>
<div class="a" style="left:26px;top:589px;width:1px;height:11px;background:#d2d2d2"></div>
<div class="a" style="left:33px;top:589px;width:1px;height:11px;background:#d2d2d2"></div>
<div class="a" style="left:40px;top:589px;width:1px;height:11px;background:#d2d2d2"></div>
<div class="a" style="left:47px;top:589px;width:1px;height:11px;background:#d2d2d2"></div>
<div class="a" style="left:26px;top:601px;width:1px;height:11px;background:#d2d2d2"></div>
<div class="a" style="left:33px;top:601px;width:1px;height:11px;background:#d2d2d2"></div>
<div class="a" style="left:40px;top:601px;width:1px;height:11px;background:#d2d2d2"></div>
<div class="a" style="left:47px;top:601px;width:1px;height:11px;background:#d2d2d2"></div>
<div class="a" style="left:26px;top:613px;width:1px;height:11px;background:#d2d2d2"></div>
<div class="a" style="left:26px;top:625px;width:1px;height:11px;background:#d2d2d2"></div>
<div class="a" style="left:26px;top:637px;width:1px;height:11px;background:#d2d2d2"></div>
<div class="a" style="left:26px;top:649px;width:1px;height:11px;background:#d2d2d2"></div>
<div class="a" style="left:26px;top:661px;width:1px;height:11px;background:#d2d2d2"></div>
<div class="a" style="left:33px;top:661px;width:1px;height:11px;background:#d2d2d2"></div>
<div class="a" style="left:40px;top:661px;width:1px;height:11px;background:#d2d2d2"></div>
<div class="a" style="left:47px;top:661px;width:1px;height:11px;background:#d2d2d2"></div>
<div class="a" style="left:26px;top:673px;width:1px;height:3px;background:#d2d2d2"></div>
<div class="a" style="left:19px;top:169px;width:1px;height:507px;background:#bdbdbd"></div>
<div class="rh" style="top:169px;height:11px">1</div>
<div class="rh" style="top:181px;height:11px">2</div>
<div class="rh" style="top:193px;height:11px">3</div>
<div class="rh" style="top:205px;height:11px">4</div>
<div class="rh" style="top:217px;height:11px">5</div>
<div class="rh" style="top:229px;height:11px">122</div>
<div class="rh" style="top:241px;height:11px">123</div>
<div class="rh" style="top:253px;height:11px">124</div>
<div class="rh" style="top:265px;height:11px">125</div>
<div class="rh" style="top:277px;height:11px">126</div>
<div class="rh" style="top:289px;height:11px">127</div>
<div class="rh" style="top:301px;height:11px">128</div>
<div class="rh" style="top:313px;height:11px">129</div>
<div class="rh" style="top:325px;height:11px">130</div>
<div class="rh" style="top:337px;height:11px">131</div>
<div class="rh" style="top:349px;height:11px">132</div>
<div class="rh" style="top:361px;height:11px">133</div>
<div class="rh" style="top:373px;height:11px">134</div>
<div class="rh" style="top:385px;height:11px">135</div>
<div class="rh" style="top:397px;height:11px">136</div>
<div class="rh" style="top:409px;height:11px">137</div>
<div class="rh" style="top:421px;height:11px">138</div>
<div class="rh" style="top:433px;height:11px">139</div>
<div class="rh" style="top:445px;height:11px">140</div>
<div class="rh" style="top:457px;height:11px">141</div>
<div class="rh" style="top:469px;height:11px">142</div>
<div class="rh" style="top:481px;height:11px">143</div>
<div class="rh" style="top:493px;height:11px">144</div>
<div class="rh" style="top:505px;height:11px">145</div>
<div class="rh" style="top:517px;height:11px">146</div>
<div class="rh" style="top:529px;height:11px">147</div>
<div class="rh" style="top:541px;height:11px">148</div>
<div class="rh" style="top:553px;height:11px">149</div>
<div class="rh" style="top:565px;height:11px">150</div>
<div class="rh" style="top:577px;height:11px">151</div>
<div class="rh" style="top:589px;height:11px">152</div>
<div class="rh" style="top:601px;height:11px">153</div>
<div class="rh" style="top:613px;height:11px">154</div>
<div class="rh" style="top:625px;height:11px">155</div>
<div class="rh" style="top:637px;height:11px">156</div>
<div class="rh" style="top:649px;height:11px">157</div>
<div class="rh" style="top:661px;height:11px">158</div>
<div class="rh" style="top:673px;height:11px">159</div>
<div class="a" style="left:278px;top:180px;width:63px;height:13px;background:#c9fcfd"></div>
<div class="a" style="left:278px;top:192px;width:63px;height:13px;background:#c9fcfd"></div>
<div class="a" style="left:278px;top:216px;width:63px;height:13px;background:#c9fcfd"></div>
<div class="a" style="left:278px;top:240px;width:63px;height:13px;background:#c9fcfd"></div>
<div class="a" style="left:278px;top:288px;width:63px;height:13px;background:#c9fcfd"></div>
<div class="a" style="left:278px;top:300px;width:63px;height:13px;background:#c9fcfd"></div>
<div class="a" style="left:278px;top:432px;width:63px;height:13px;background:#c9fcfd"></div>
<div class="a" style="left:278px;top:444px;width:63px;height:13px;background:#c9fcfd"></div>
<div class="a" style="left:278px;top:456px;width:63px;height:13px;background:#c9fcfd"></div>
<div class="a" style="left:278px;top:492px;width:63px;height:13px;background:#c9fcfd"></div>
<div class="a" style="left:278px;top:612px;width:63px;height:13px;background:#c9fcfd"></div>
<div class="a" style="left:340px;top:612px;width:63px;height:13px;background:#c9fcfd"></div>
<div class="a" style="left:278px;top:624px;width:63px;height:13px;background:#c9fcfd"></div>
<div class="a" style="left:340px;top:624px;width:63px;height:13px;background:#c9fcfd"></div>
<div class="a" style="left:278px;top:636px;width:63px;height:13px;background:#c9fcfd"></div>
<div class="a" style="left:340px;top:636px;width:63px;height:13px;background:#c9fcfd"></div>
<div class="a" style="left:278px;top:648px;width:63px;height:13px;background:#c9fcfd"></div>
<div class="a" style="left:340px;top:648px;width:63px;height:13px;background:#c9fcfd"></div>
<div class="a" style="left:278px;top:672px;width:63px;height:4px;background:#c9fcfd"></div>
<div class="a" style="left:276px;top:151px;width:1px;height:525px;background:#8e8e8e"></div>
<div class="a" style="left:0;top:228px;width:1278px;height:1px;background:#8e8e8e"></div>
<div class="a" style="left:278px;top:167px;width:63px;height:2px;background:#1e5e3e"></div>
<div class="a" style="left:20px;top:169px;width:27px;height:11px;overflow:hidden"><div class="cell" style="left:2px;top:0;color:#141414;font-weight:bold;transform:scaleX(0.86);transform-origin:0 0">Timing</div></div>
<div class="cell" style="left:29px;top:181px;color:#141414;transform:scaleX(0.9);transform-origin:0 0">Start of Development</div>
<div class="cell" style="left:217px;top:181px;color:#141414;transform:scaleX(0.9);transform-origin:0 0">Date</div>
<div class="cell" style="left:278px;width:61px;text-align:right;top:181px;color:#3160d4;transform:scaleX(0.9);transform-origin:100% 0">01-Apr-16</div>
<div class="cell" style="left:29px;top:193px;color:#141414;transform:scaleX(0.9);transform-origin:0 0">Phase 01 - Development Phase</div>
<div class="cell" style="left:217px;top:193px;color:#141414;transform:scaleX(0.9);transform-origin:0 0">Months</div>
<div class="cell" style="left:278px;width:61px;text-align:right;top:193px;color:#3160d4;transform:scaleX(0.9);transform-origin:100% 0">18</div>
<div class="cell" style="left:405px;top:193px;color:#141414;transform:scaleX(0.9);transform-origin:0 0">Foreign IRR</div>
<div class="cell" style="left:464px;width:61px;text-align:right;top:193px;color:#141414;transform:scaleX(0.9);transform-origin:100% 0">9.49%</div>
<div class="cell" style="left:29px;top:205px;color:#141414;transform:scaleX(0.9);transform-origin:0 0">Event - Ready to Bid</div>
<div class="cell" style="left:217px;top:205px;color:#141414;transform:scaleX(0.9);transform-origin:0 0">Date</div>
<div class="cell" style="left:278px;width:61px;text-align:right;top:205px;color:#141414;transform:scaleX(0.9);transform-origin:100% 0">01-Oct-17</div>
<div class="cell" style="left:29px;top:217px;color:#141414;transform:scaleX(0.9);transform-origin:0 0">Phase 02 EPC Bidding Phase</div>
<div class="cell" style="left:217px;top:217px;color:#141414;transform:scaleX(0.9);transform-origin:0 0">Months</div>
<div class="cell" style="left:278px;width:61px;text-align:right;top:217px;color:#3160d4;transform:scaleX(0.9);transform-origin:100% 0">2</div>
<div class="cell" style="left:22px;top:229px;color:#141414;font-weight:bold;transform:scaleX(0.86);transform-origin:0 0">Operating Expenses</div>
<div class="cell" style="left:29px;top:241px;color:#141414;transform:scaleX(0.9);transform-origin:0 0">Currency of Operating Expenses</div>
<div class="cell" style="left:214px;width:63px;text-align:center;top:241px;color:#141414;transform:scaleX(0.9);transform-origin:50% 0">Local</div>
<div class="cell" style="left:278px;width:63px;text-align:center;top:241px;color:#3160d4;transform:scaleX(0.75);transform-origin:50% 0">TRUE</div>
<div class="cell" style="left:214px;width:63px;text-align:center;top:253px;color:#141414;transform:scaleX(0.9);transform-origin:50% 0">Foreign</div>
<div class="cell" style="left:278px;width:63px;text-align:center;top:253px;color:#141414;transform:scaleX(0.75);transform-origin:50% 0">FALSE</div>
<div class="cell" style="left:214px;width:63px;text-align:center;top:265px;color:#141414;transform:scaleX(0.9);transform-origin:50% 0">Currency</div>
<div class="cell" style="left:278px;width:63px;text-align:center;top:265px;color:#141414;transform:scaleX(0.75);transform-origin:50% 0">PKR</div>
<div class="cell" style="left:29px;top:289px;color:#141414;transform:scaleX(0.9);transform-origin:0 0">Base O&amp;M Fee</div>
<div class="cell" style="left:217px;top:289px;color:#141414;transform:scaleX(0.9);transform-origin:0 0">USD/kWp-yr</div>
<div class="cell" style="left:278px;width:61px;text-align:right;top:289px;color:#3160d4;transform:scaleX(0.9);transform-origin:100% 0">15.00</div>
<div class="cell" style="left:340px;width:61px;text-align:right;top:289px;color:#d91f37;transform:scaleX(0.9);transform-origin:100% 0">100.00%</div>
<div class="cell" style="left:402px;width:61px;text-align:right;top:289px;color:#141414;transform:scaleX(0.9);transform-origin:100% 0">15.00</div>
<div class="cell" style="left:29px;top:301px;color:#141414;transform:scaleX(0.9);transform-origin:0 0">G&amp;A, Insurance, Trustee</div>
<div class="cell" style="left:217px;top:301px;color:#141414;transform:scaleX(0.9);transform-origin:0 0">USD/kWp-yr</div>
<div class="cell" style="left:278px;width:61px;text-align:right;top:301px;color:#3160d4;transform:scaleX(0.9);transform-origin:100% 0">3.00</div>
<div class="cell" style="left:402px;width:61px;text-align:right;top:301px;color:#141414;transform:scaleX(0.9);transform-origin:100% 0">3.00</div>
<div class="cell" style="left:29px;top:313px;color:#141414;transform:scaleX(0.9);transform-origin:0 0">Tracking O&amp;M</div>
<div class="cell" style="left:217px;top:313px;color:#141414;transform:scaleX(0.9);transform-origin:0 0">USD/kWp-yr</div>
<div class="cell" style="left:278px;width:61px;text-align:right;top:313px;color:#d91f37;transform:scaleX(0.9);transform-origin:100% 0">0.00</div>
<div class="cell" style="left:402px;width:61px;text-align:right;top:313px;color:#141414;transform:scaleX(0.9);transform-origin:100% 0">0.00</div>
<div class="cell" style="left:36px;top:325px;color:#141414;transform:scaleX(0.9);transform-origin:0 0">Total</div>
<div class="cell" style="left:217px;top:325px;color:#141414;transform:scaleX(0.9);transform-origin:0 0">USD/kWp-yr</div>
<div class="cell" style="left:278px;width:61px;text-align:right;top:325px;color:#141414;transform:scaleX(0.9);transform-origin:100% 0">18.00</div>
<div class="cell" style="left:29px;top:349px;color:#141414;transform:scaleX(0.9);transform-origin:0 0">Base O&amp;M Fee</div>
<div class="cell" style="left:217px;top:349px;color:#141414;transform:scaleX(0.9);transform-origin:0 0">PKR/kWp-yr</div>
<div class="cell" style="left:278px;width:61px;text-align:right;top:349px;color:#141414;transform:scaleX(0.9);transform-origin:100% 0">1,570.05</div>
<div class="cell" style="left:340px;width:61px;text-align:right;top:349px;color:#141414;transform:scaleX(0.9);transform-origin:100% 0">100.00%</div>
<div class="cell" style="left:402px;width:61px;text-align:right;top:349px;color:#141414;transform:scaleX(0.9);transform-origin:100% 0">1,570.05</div>
<div class="cell" style="left:29px;top:361px;color:#141414;transform:scaleX(0.9);transform-origin:0 0">G&amp;A, Insurance, Trustee</div>
<div class="cell" style="left:217px;top:361px;color:#141414;transform:scaleX(0.9);transform-origin:0 0">PKR/kWp-yr</div>
<div class="cell" style="left:278px;width:61px;text-align:right;top:361px;color:#141414;transform:scaleX(0.9);transform-origin:100% 0">314.01</div>
<div class="cell" style="left:402px;width:61px;text-align:right;top:361px;color:#141414;transform:scaleX(0.9);transform-origin:100% 0">314.01</div>
<div class="cell" style="left:29px;top:373px;color:#141414;transform:scaleX(0.9);transform-origin:0 0">Tracking O&amp;M</div>
<div class="cell" style="left:217px;top:373px;color:#141414;transform:scaleX(0.9);transform-origin:0 0">PKR/kWp-yr</div>
<div class="cell" style="left:278px;width:61px;text-align:right;top:373px;color:#141414;transform:scaleX(0.9);transform-origin:100% 0">0.00</div>
<div class="cell" style="left:402px;width:61px;text-align:right;top:373px;color:#141414;transform:scaleX(0.9);transform-origin:100% 0">0.00</div>
<div class="cell" style="left:36px;top:385px;color:#141414;transform:scaleX(0.9);transform-origin:0 0">Total</div>
<div class="cell" style="left:217px;top:385px;color:#141414;transform:scaleX(0.9);transform-origin:0 0">PKR/kWp-yr</div>
<div class="cell" style="left:278px;width:61px;text-align:right;top:385px;color:#141414;transform:scaleX(0.9);transform-origin:100% 0">1,884.06</div>
<div class="cell" style="left:22px;top:409px;color:#141414;font-weight:bold;transform:scaleX(0.86);transform-origin:0 0">Tax and Depreciation</div>
<div class="cell" style="left:29px;top:421px;color:#141414;transform:scaleX(0.9);transform-origin:0 0">Currency of Tax Return</div>
<div class="cell" style="left:214px;width:63px;text-align:center;top:421px;color:#141414;transform:scaleX(0.75);transform-origin:50% 0">PKR</div>
<div class="cell" style="left:29px;top:433px;color:#141414;transform:scaleX(0.9);transform-origin:0 0">Depreciation Life</div>
<div class="cell" style="left:217px;top:433px;color:#141414;transform:scaleX(0.9);transform-origin:0 0">Yrs</div>
<div class="cell" style="left:278px;width:61px;text-align:right;top:433px;color:#3160d4;transform:scaleX(0.9);transform-origin:100% 0">20</div>
<div class="cell" style="left:29px;top:445px;color:#141414;transform:scaleX(0.9);transform-origin:0 0">Fee Amortisation Period</div>
<div class="cell" style="left:217px;top:445px;color:#141414;transform:scaleX(0.9);transform-origin:0 0">Yrs</div>
<div class="cell" style="left:278px;width:61px;text-align:right;top:445px;color:#3160d4;transform:scaleX(0.9);transform-origin:100% 0">5</div>
<div class="cell" style="left:29px;top:457px;color:#141414;transform:scaleX(0.9);transform-origin:0 0">Income Tax Rate</div>
<div class="cell" style="left:217px;top:457px;color:#141414;transform:scaleX(0.9);transform-origin:0 0">Percent</div>
<div class="cell" style="left:278px;width:61px;text-align:right;top:457px;color:#3160d4;transform:scaleX(0.9);transform-origin:100% 0">20.00%</div>
<div class="cell" style="left:22px;top:481px;color:#141414;font-weight:bold;transform:scaleX(0.86);transform-origin:0 0">Financing</div>
<div class="cell" style="left:29px;top:493px;color:#141414;transform:scaleX(0.9);transform-origin:0 0">Currency of Debt</div>
<div class="cell" style="left:214px;width:63px;text-align:center;top:493px;color:#141414;transform:scaleX(0.9);transform-origin:50% 0">Local</div>
<div class="cell" style="left:278px;width:63px;text-align:center;top:493px;color:#3160d4;transform:scaleX(0.75);transform-origin:50% 0">FALSE</div>
<div class="cell" style="left:214px;width:63px;text-align:center;top:505px;color:#141414;transform:scaleX(0.9);transform-origin:50% 0">Foreign</div>
<div class="cell" style="left:278px;width:63px;text-align:center;top:505px;color:#141414;transform:scaleX(0.75);transform-origin:50% 0">TRUE</div>
<div class="cell" style="left:214px;width:63px;text-align:center;top:517px;color:#141414;transform:scaleX(0.9);transform-origin:50% 0">Currency</div>
<div class="cell" style="left:278px;width:63px;text-align:center;top:517px;color:#141414;transform:scaleX(0.75);transform-origin:50% 0">USD</div>
<div class="cell" style="left:340px;width:63px;text-align:center;top:517px;color:#141414;transform:scaleX(0.75);transform-origin:50% 0">PKR</div>
<div class="cell" style="left:278px;width:63px;text-align:center;top:529px;color:#141414;transform:scaleX(0.75);transform-origin:50% 0">USD</div>
<div class="cell" style="left:29px;top:541px;color:#141414;transform:scaleX(0.9);transform-origin:0 0">Debt Percent</div>
<div class="cell" style="left:217px;top:541px;color:#141414;transform:scaleX(0.9);transform-origin:0 0">Percent</div>
<div class="cell" style="left:278px;width:61px;text-align:right;top:541px;color:#d91f37;transform:scaleX(0.9);transform-origin:100% 0">70.00%</div>
<div class="cell" style="left:29px;top:565px;color:#141414;transform:scaleX(0.9);transform-origin:0 0">Debt Repayment</div>
<div class="cell" style="left:217px;top:565px;color:#141414;transform:scaleX(0.9);transform-origin:0 0">Sculpt</div>
<div class="cell" style="left:278px;width:63px;text-align:center;top:565px;color:#d91f37;transform:scaleX(0.75);transform-origin:50% 0">FALSE</div>
<div class="cell" style="left:29px;top:577px;color:#141414;transform:scaleX(0.9);transform-origin:0 0">Debt Tenor</div>
<div class="cell" style="left:217px;top:577px;color:#141414;transform:scaleX(0.9);transform-origin:0 0">Years</div>
<div class="cell" style="left:278px;width:61px;text-align:right;top:577px;color:#d91f37;transform:scaleX(0.9);transform-origin:100% 0">15</div>
<div class="cell" style="left:278px;width:63px;text-align:center;top:601px;color:#141414;transform:scaleX(0.75);transform-origin:50% 0">USD</div>
<div class="cell" style="left:340px;width:63px;text-align:center;top:601px;color:#141414;transform:scaleX(0.75);transform-origin:50% 0">PKR</div>
<div class="cell" style="left:402px;width:63px;text-align:center;top:601px;color:#141414;transform:scaleX(0.75);transform-origin:50% 0">USD</div>
<div class="cell" style="left:467px;top:601px;color:#141414;transform:scaleX(0.9);transform-origin:0 0">Sensitivity</div>
<div class="cell" style="left:526px;width:63px;text-align:center;top:601px;color:#141414;transform:scaleX(0.9);transform-origin:50% 0">Applied</div>
<div class="cell" style="left:29px;top:613px;color:#141414;transform:scaleX(0.9);transform-origin:0 0">Up-Front Fee</div>
<div class="cell" style="left:217px;top:613px;color:#141414;transform:scaleX(0.9);transform-origin:0 0">Percent</div>
<div class="cell" style="left:278px;width:61px;text-align:right;top:613px;color:#3160d4;transform:scaleX(0.9);transform-origin:100% 0">2.00%</div>
<div class="cell" style="left:340px;width:61px;text-align:right;top:613px;color:#3160d4;transform:scaleX(0.9);transform-origin:100% 0">3.00%</div>
<div class="cell" style="left:402px;width:63px;text-align:center;top:613px;color:#141414;transform:scaleX(0.9);transform-origin:50% 0">2.00%</div>
<div class="cell" style="left:526px;width:61px;text-align:right;top:613px;color:#141414;transform:scaleX(0.9);transform-origin:100% 0">2.00%</div>
<div class="cell" style="left:29px;top:625px;color:#141414;transform:scaleX(0.9);transform-origin:0 0">Base Rate</div>
<div class="cell" style="left:217px;top:625px;color:#141414;transform:scaleX(0.9);transform-origin:0 0">Percent</div>
<div class="cell" style="left:278px;width:61px;text-align:right;top:625px;color:#3160d4;transform:scaleX(0.9);transform-origin:100% 0">2.00%</div>
<div class="cell" style="left:340px;width:61px;text-align:right;top:625px;color:#3160d4;transform:scaleX(0.9);transform-origin:100% 0">6.00%</div>
<div class="cell" style="left:402px;width:63px;text-align:center;top:625px;color:#141414;transform:scaleX(0.9);transform-origin:50% 0">2.00%</div>
<div class="cell" style="left:464px;width:61px;text-align:right;top:625px;color:#d91f37;transform:scaleX(0.9);transform-origin:100% 0">100.00%</div>
<div class="cell" style="left:526px;width:61px;text-align:right;top:625px;color:#141414;transform:scaleX(0.9);transform-origin:100% 0">2.00%</div>
<div class="cell" style="left:29px;top:637px;color:#141414;transform:scaleX(0.9);transform-origin:0 0">Credit Spread</div>
<div class="cell" style="left:217px;top:637px;color:#141414;transform:scaleX(0.9);transform-origin:0 0">Percent</div>
<div class="cell" style="left:278px;width:61px;text-align:right;top:637px;color:#3160d4;transform:scaleX(0.9);transform-origin:100% 0">1.50%</div>
<div class="cell" style="left:340px;width:61px;text-align:right;top:637px;color:#3160d4;transform:scaleX(0.9);transform-origin:100% 0">2.00%</div>
<div class="cell" style="left:402px;width:63px;text-align:center;top:637px;color:#141414;transform:scaleX(0.9);transform-origin:50% 0">1.50%</div>
<div class="cell" style="left:464px;width:61px;text-align:right;top:637px;color:#d91f37;transform:scaleX(0.9);transform-origin:100% 0">100.00%</div>
<div class="cell" style="left:526px;width:61px;text-align:right;top:637px;color:#141414;transform:scaleX(0.9);transform-origin:100% 0">1.50%</div>
<div class="cell" style="left:29px;top:649px;color:#141414;transform:scaleX(0.9);transform-origin:0 0">Contry Risk Premium</div>
<div class="cell" style="left:217px;top:649px;color:#141414;transform:scaleX(0.9);transform-origin:0 0">Percent</div>
<div class="cell" style="left:278px;width:61px;text-align:right;top:649px;color:#3160d4;transform:scaleX(0.9);transform-origin:100% 0">1.00%</div>
<div class="cell" style="left:340px;width:61px;text-align:right;top:649px;color:#3160d4;transform:scaleX(0.9);transform-origin:100% 0">0.00%</div>
<div class="cell" style="left:402px;width:63px;text-align:center;top:649px;color:#141414;transform:scaleX(0.9);transform-origin:50% 0">1.00%</div>
<div class="cell" style="left:464px;width:61px;text-align:right;top:649px;color:#d91f37;transform:scaleX(0.9);transform-origin:100% 0">100.00%</div>
<div class="cell" style="left:526px;width:61px;text-align:right;top:649px;color:#141414;transform:scaleX(0.9);transform-origin:100% 0">1.00%</div>
<div class="a" style="left:352px;top:243px;width:10px;height:10px;border:1.3px solid #111;background:#fff"></div><svg class="a" style="left:352px;top:243px" width="10" height="10" viewBox="0 0 10 10"><path d="M2.5 5 L3.5 8.5 L7.5 2" fill="none" stroke="#111" stroke-width="1"/></svg><div class="t" style="left:364px;top:245px;font-size:6px;color:#555;letter-spacing:0.05px;-webkit-text-stroke:0">Local Expense Currency</div>
<div class="a" style="left:352px;top:495px;width:10px;height:10px;border:1.3px solid #111;background:#fff"></div><div class="t" style="left:364px;top:497px;font-size:6px;color:#555;letter-spacing:0.05px;-webkit-text-stroke:0">Local Currency Debt</div>
<div class="a" style="left:353px;top:565px;width:10px;height:10px;border:1.3px solid #111;background:#fff"></div><div class="t" style="left:365px;top:567px;font-size:6px;color:#555;letter-spacing:0.05px;-webkit-text-stroke:0">Sculpt Switch</div>
<div class="a" style="left:402px;top:241px;width:1px;height:11px;background:#d2d2d2"></div>
<div class="a" style="left:469px;top:627px;width:16px;height:9px;border:1px solid #111;border-radius:2px;background:#dcdcdc"></div>
<div class="a" style="left:470px;top:631px;width:14px;height:1px;background:#111"></div>
<div class="a" style="left:0;top:676px;width:1278px;height:26px;background:linear-gradient(#f1f1f1,#ececec)"></div>
<div class="a" style="left:0;top:676px;width:1278px;height:1px;background:#d2d2d2"></div>
<svg class="a" style="left:12px;top:682px" width="40" height="14" viewBox="0 0 40 14"><path d="M10 2 L10 12 L3 7 Z" fill="#9a9a9a"/><path d="M26 2 L26 12 L32 7 Z" fill="#5a5a5a"/></svg>
<div class="tsep" style="left:60px"></div>
<div class="tsep" style="left:134px"></div>
<div class="tsep" style="left:244px"></div>
<div class="tsep" style="left:320px"></div>
<div class="tsep" style="left:464px"></div>
<div class="tsep" style="left:846px"></div>
<div class="tsep" style="left:972px"></div>
<div class="tsep" style="left:1148px"></div>
<div class="tsep" style="left:1210px"></div>
<div class="tsep" style="left:1248px"></div>
<div class="a" style="left:464px;top:676px;width:173px;height:3px;background:#6aa2bf"></div>
<div class="a" style="left:847px;top:676px;width:125px;height:3px;background:#e86f7a"></div>
<div class="a" style="left:973px;top:676px;width:175px;height:3px;background:#a06aa8"></div>
<div class="a" style="left:638px;top:676px;width:97px;height:22px;background:#fff"></div>
<div class="a" style="left:638px;top:695px;width:97px;height:3px;background:#7186d2"></div>
<div class="tab" style="left:73px">Contents</div>
<div class="tab" style="left:147px">Currency Notes</div>
<div class="tab" style="left:257px">Summary</div>
<div class="tab" style="left:333px">Economics of Players</div>
<div class="tab" style="left:477px">Development and Advisory</div>
<div class="tab" style="left:748px">Financial Model</div>
<div class="tab" style="left:859px">Sensitivity Factors</div>
<div class="tab" style="left:985px">Energy Yield Data &quot;PVSyst&quot;</div>
<div class="tab" style="left:650px;color:#2b3fae;font-weight:bold;font-size:11.8px">Assumptions</div>
<div class="tab" style="left:1161px;width:46px;overflow:hidden"><span>Debt </span><span style="color:#a8a8a8">T</span><span style="color:#c4c4c4">ra</span></div>
<svg class="a" style="left:1224px;top:683px" width="12" height="11" viewBox="0 0 12 11"><rect x="0.5" y="4.6" width="11" height="1.8" fill="#444"/><rect x="5.1" y="0" width="1.8" height="11" fill="#444"/></svg>
<div class="a" style="left:0;top:702px;width:1278px;height:1px;background:#b9b9b9"></div>
<div class="a" style="left:0;top:703px;width:1278px;height:21px;background:linear-gradient(#e3e3e3,#d0d0d0)"></div>
<div class="t" style="left:24px;top:708px;font-size:12.2px;color:#575757;-webkit-text-stroke:0.1px #575757">Ready</div>
<div class="a" style="left:994px;top:703px;width:37px;height:21px;background:#a9a9a9"></div>
<svg class="a" style="left:1006px;top:707px" width="14" height="14" viewBox="0 0 14 14">
<rect x="0.5" y="0.5" width="13" height="13" fill="#a0a0a0" stroke="#fafafa" stroke-width="1.2"/>
<path d="M4.8 0.5 V13.5 M9.2 0.5 V13.5 M0.5 4.8 H13.5 M0.5 9.2 H13.5" stroke="#fafafa" stroke-width="1.1"/></svg>
<svg class="a" style="left:1041px;top:707px" width="14" height="14" viewBox="0 0 14 14">
<rect x="0.5" y="0.5" width="13" height="13" fill="none" stroke="#5a5a5a" stroke-width="1"/>
<rect x="3.5" y="2.5" width="7" height="9" fill="none" stroke="#5a5a5a" stroke-width="1"/>
<path d="M5 5 H9 M5 7 H9 M5 9 H9" stroke="#5a5a5a" stroke-width="0.9"/></svg>
<div class="a" style="left:1074px;top:713px;width:8px;height:2px;background:#555"></div>
<div class="a" style="left:1089px;top:712px;width:100px;height:4px;border-radius:2px;background:#9c9c9c"></div>
<div class="a" style="left:1139px;top:713px;width:2px;height:2px;background:#eee"></div>
<div class="a" style="left:1124px;top:708px;width:12px;height:12px;border-radius:50%;background:linear-gradient(#fff,#e6e6e6);box-shadow:0 0 0 0.6px #9a9a9a,0 1px 1px rgba(0,0,0,.2)"></div>
<svg class="a" style="left:1196px;top:710px" width="9" height="9" viewBox="0 0 9 9"><rect x="0" y="3.6" width="9" height="1.8" fill="#444"/><rect x="3.6" y="0" width="1.8" height="9" fill="#444"/></svg>
<div class="t" style="left:1225px;top:708px;font-size:12.6px;color:#555">80%</div>
<div class="a" style="left:1279px;top:0;width:1px;height:724px;background:#a9a9a9"></div>
<div class="a" style="left:1279px;top:0;width:1px;height:4px;background:#16241a"></div>
</body></html>
